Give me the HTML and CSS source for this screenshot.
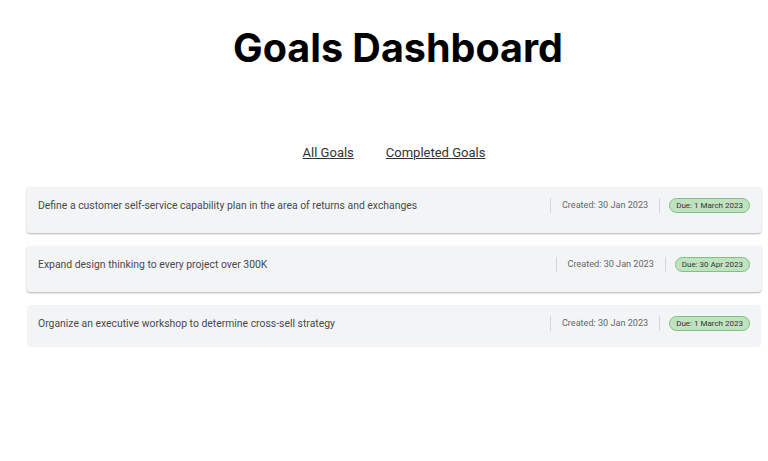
FILE: index.html
```html
<!DOCTYPE html>
<html lang="en">
<head>
  <meta charset="UTF-8" />
  <meta name="viewport" content="width=device-width, initial-scale=1.0"/>
  <title>Goals Dashboard</title>
  <link rel="stylesheet" href="styles.css">
</head>
<body>

  <div class="page">
    <h1>Goals Dashboard</h1>

    <nav class="tabs">
      <a href="#">All Goals</a>
      <a href="#">Completed Goals</a>
    </nav>

    <div class="goals">
      <div class="goal">
        <div class="goal-text">Define a customer self-service capability plan in the area of returns and exchanges</div>
        <div class="goal-meta">
          <span class="created">Created: 30 Jan 2023</span>
          <span class="due">Due: 1 March 2023</span>
        </div>
      </div>
      <div class="goal">
        <div class="goal-text">Expand design thinking to every project over 300K</div>
        <div class="goal-meta">
          <span class="created">Created: 30 Jan 2023</span>
          <span class="due">Due: 30 Apr 2023</span>
        </div>
      </div>
      <div class="goal flat">
        <div class="goal-text">Organize an executive workshop to determine cross-sell strategy</div>
        <div class="goal-meta">
          <span class="created">Created: 30 Jan 2023</span>
          <span class="due">Due: 1 March 2023</span>
        </div>
      </div>
    </div>
  </div>

</body>
</html>
```

FILE: styles.css
```css
body {
  margin: 0;
  font-family: Roboto, 'Liberation Sans', sans-serif;
  background: #fff;
  color: #444;
}

.page {
  margin: 0 7px 0 27px;
}

h1 {
  font-family: Inter, 'Liberation Sans', sans-serif;
  font-weight: 700;
  font-size: 39.5px;
  color: #000;
  text-align: center;
  margin: 24px 0 0;
  padding-left: 8px;
  line-height: 48px;
}

.tabs {
  display: flex;
  justify-content: center;
  gap: 32px;
  margin-top: 73px;
}

.tabs a {
  color: #333;
  font-size: 13px;
  line-height: 16px;
}

.goals {
  margin-top: 26px;
  display: flex;
  flex-direction: column;
  gap: 13px;
}

.goal {
  background: #f3f4f6;
  border-radius: 3px;
  box-shadow: 0 1px 2px rgba(0,0,0,0.3);
  padding: 11px 11px 20px;
  display: flex;
  justify-content: space-between;
  align-items: center;
  font-size: 10.4px;
  height: 15px;
}

.goal.flat {
  box-shadow: none;
  padding-bottom: 16px;
}

.goal-text {
  color: #4a4a4a;
}

.goal-meta {
  display: flex;
  align-items: center;
}

.created {
  color: #666;
  font-size: 9.1px;
  border-left: 1px solid #d6d6d6;
  border-right: 1px solid #d6d6d6;
  padding: 0 11px;
  line-height: 15px;
}

.due {
  margin-left: 9px;
  background: #bfe3c0;
  border: 1px solid #7ac47e;
  border-radius: 8px;
  color: #333;
  font-size: 8px;
  padding: 2px 6px;
  line-height: 9px;
}
```
